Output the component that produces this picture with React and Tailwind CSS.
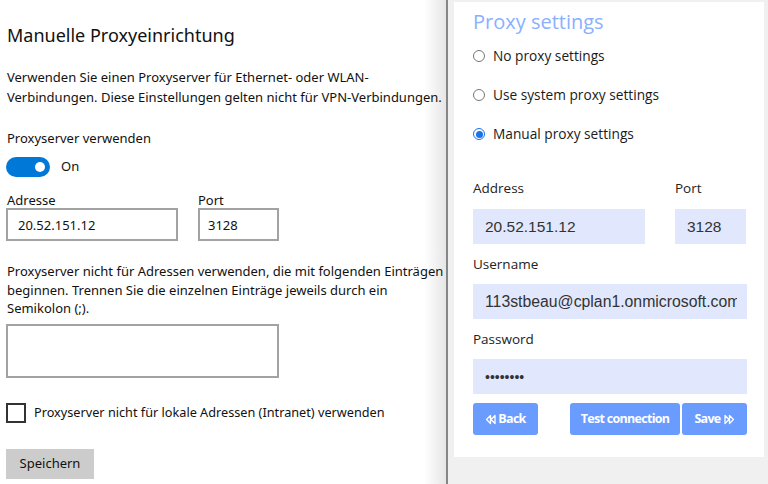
import { useState } from 'react'

const segoe = { fontFamily: '"Noto Sans", "Open Sans", sans-serif' }
const arial = { fontFamily: '"Liberation Sans", Arial, sans-serif' }

function Toggle({ on, onChange }) {
  return (
    <button
      onClick={() => onChange(!on)}
      className={`relative w-[44px] h-[20px] rounded-full ${on ? 'bg-[#0078d7]' : 'bg-white border-2 border-[#333]'}`}
    >
      <span className={`absolute top-[5px] w-[10px] h-[10px] rounded-full ${on ? 'left-[29px] bg-white' : 'left-[4px] bg-[#333]'}`} />
    </button>
  )
}

function Radio({ label, checked, onSelect }) {
  return (
    <label className="flex items-center h-[20px] cursor-pointer" onClick={onSelect}>
      <span className={`w-[12px] h-[12px] rounded-full border flex items-center justify-center ${checked ? 'border-[#1a73e8]' : 'border-[#777]'} bg-white`}>
        {checked && <span className="w-[7px] h-[7px] rounded-full bg-[#1a73e8]" />}
      </span>
      <span className="ml-[8px] text-[13.7px] text-[#1a1a1a]">{label}</span>
    </label>
  )
}

function DoubleArrow({ dir }) {
  const d = dir === 'left'
    ? 'M5.5 1.5 L1.5 5.5 L5.5 9.5 Z M10 1.5 L6 5.5 L10 9.5 Z'
    : 'M1 1.5 L5 5.5 L1 9.5 Z M5.5 1.5 L9.5 5.5 L5.5 9.5 Z'
  return (
    <svg width="11" height="11" viewBox="0 0 11 11" className="inline-block">
      <path d={d} fill="none" stroke="white" strokeWidth="1.3" strokeLinejoin="round" />
    </svg>
  )
}

export default function App() {
  const [useProxy, setUseProxy] = useState(true)
  const [localBypass, setLocalBypass] = useState(false)
  const [mode, setMode] = useState('manual')

  return (
    <div className="flex w-[768px] h-[484px] overflow-hidden bg-white">
      {/* Windows settings pane */}
      <div
        className="w-[446px] shrink-0 pl-[7px] text-[#111] bg-[linear-gradient(to_right,#ffffff_424px,#e6e6e6_446px)]"
        style={segoe}
      >
        <h1 className="mt-[22px] text-[18px] leading-[26px] font-normal">Manuelle Proxyeinrichtung</h1>
        <p className="mt-[19px] text-[13px] leading-[20px]">
          Verwenden Sie einen Proxyserver für Ethernet- oder WLAN-<br />
          Verbindungen. Diese Einstellungen gelten nicht für VPN-Verbindungen.
        </p>
        <div className="mt-[21px] text-[13px] leading-[20px]">Proxyserver verwenden</div>
        <div className="mt-[9px] flex items-center gap-[11px] -ml-[1px]">
          <Toggle on={useProxy} onChange={setUseProxy} />
          <span className="text-[13px]">{useProxy ? 'On' : 'Off'}</span>
        </div>
        <div className="mt-[15px] flex gap-[20px] -ml-[1px]">
          <div>
            <div className="text-[13px] leading-[16px] pl-[1px]">Adresse</div>
            <input
              defaultValue="20.52.151.12"
              className="w-[172px] h-[33px] border-2 border-[#a3a3a3] px-[10px] text-[13px] outline-none bg-white"
            />
          </div>
          <div>
            <div className="text-[13px] leading-[16px]">Port</div>
            <input
              defaultValue="3128"
              className="w-[81px] h-[33px] border-2 border-[#a3a3a3] px-[8px] text-[13px] outline-none bg-white"
            />
          </div>
        </div>
        <p className="mt-[21px] text-[13px] leading-[18.5px] whitespace-nowrap">
          Proxyserver nicht für Adressen verwenden, die mit folgenden Einträgen<br />
          beginnen. Trennen Sie die einzelnen Einträge jeweils durch ein<br />
          Semikolon (;).
        </p>
        <textarea className="block mt-[6px] -ml-[1px] w-[273px] h-[54px] border-2 border-[#a3a3a3] resize-none outline-none bg-white" />
        <label className="mt-[25px] -ml-[1px] flex items-center gap-[8px] cursor-pointer" onClick={() => setLocalBypass(v => !v)}>
          <span className="w-[20px] h-[20px] border-2 border-[#333] flex items-center justify-center text-[12px]">
            {localBypass ? '✓' : ''}
          </span>
          <span className="text-[12.7px]">Proxyserver nicht für lokale Adressen (Intranet) verwenden</span>
        </label>
        <button className="mt-[26px] -ml-[1px] w-[88px] h-[30px] bg-[#cccccc] text-[13px]">Speichern</button>
      </div>
      <div className="w-[2px] shrink-0 bg-[#868686]" />

      {/* Extension popup */}
      <div className="flex-1 bg-[#f0f0f0] pt-[2px] pl-[6px] pr-[4px]" style={{ fontFamily: '"Open Sans", "Noto Sans", sans-serif' }}>
        <div className="h-[455px] bg-white pl-[19px] pr-[17px]">
          <h2 className="pt-[6px] text-[20px] leading-[27px] text-[#8ab0ff]">Proxy settings</h2>
          <div className="mt-[11px] flex flex-col gap-[19px]">
            <Radio label="No proxy settings" checked={mode === 'none'} onSelect={() => setMode('none')} />
            <Radio label="Use system proxy settings" checked={mode === 'system'} onSelect={() => setMode('system')} />
            <Radio label="Manual proxy settings" checked={mode === 'manual'} onSelect={() => setMode('manual')} />
          </div>
          <div className="mt-[34px] flex gap-[30px]">
            <div>
              <div className="text-[13.5px] leading-[20px] text-[#222]">Address</div>
              <input
                defaultValue="20.52.151.12"
                className="mt-[11px] w-[172px] h-[35px] bg-[#e1e8fd] px-[12px] text-[15.5px] text-[#333] outline-none"
                style={arial}
              />
            </div>
            <div>
              <div className="text-[13.5px] leading-[20px] text-[#222]">Port</div>
              <input
                defaultValue="3128"
                className="mt-[11px] w-[71px] h-[35px] bg-[#e1e8fd] px-[12px] text-[15.5px] text-[#333] outline-none"
                style={arial}
              />
            </div>
          </div>
          <div className="mt-[10px] text-[13.5px] leading-[20px] text-[#222]">Username</div>
          <input
            defaultValue="113stbeau@cplan1.onmicrosoft.com"
            className="mt-[10px] w-[274px] h-[35px] bg-[#e1e8fd] pl-[12px] pr-[10px] text-[15.8px] text-[#333] outline-none"
            style={arial}
          />
          <div className="mt-[10px] text-[13.5px] leading-[20px] text-[#222]">Password</div>
          <input
            type="password"
            defaultValue="password"
            className="mt-[10px] w-[274px] h-[35px] bg-[#e1e8fd] px-[12px] text-[14px] text-[#333] outline-none"
            style={arial}
          />
          <div className="mt-[9px] flex w-[274px] text-white font-bold text-[12.5px] tracking-[-0.7px]">
            <button className="w-[65px] h-[32px] rounded-[3px] bg-[#6a9bff] flex items-center justify-center gap-[2px]">
              <DoubleArrow dir="left" />Back
            </button>
            <button className="ml-auto w-[110px] h-[32px] rounded-[3px] bg-[#6a9bff]">Test connection</button>
            <button className="ml-[2px] w-[65px] h-[32px] rounded-[3px] bg-[#6a9bff] flex items-center justify-center gap-[3px]">
              Save<DoubleArrow dir="right" />
            </button>
          </div>
        </div>
      </div>
    </div>
  )
}
